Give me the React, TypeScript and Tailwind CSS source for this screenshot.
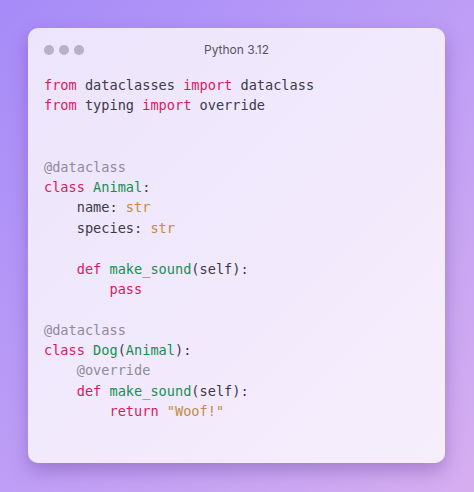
const kw = "text-[#d81b60]";
const fn = "text-[#16904f]";
const ty = "text-[#c28a45]";
const dec = "text-[#8e8b9a]";

type Tok = [string, string?];

const lines: Tok[][] = [
  [["from", kw], [" dataclasses "], ["import", kw], [" dataclass"]],
  [["from", kw], [" typing "], ["import", kw], [" override"]],
  [],
  [],
  [["@dataclass", dec]],
  [["class", kw], [" "], ["Animal", fn], [":"]],
  [["    name: "], ["str", ty]],
  [["    species: "], ["str", ty]],
  [],
  [["    "], ["def", kw], [" "], ["make_sound", fn], ["(self):"]],
  [["        "], ["pass", kw]],
  [],
  [["@dataclass", dec]],
  [["class", kw], [" "], ["Dog", fn], ["("], ["Animal", fn], ["):"]],
  [["    "], ["@override", dec]],
  [["    "], ["def", kw], [" "], ["make_sound", fn], ["(self):"]],
  [["        "], ["return", kw], [" "], ['"Woof!"', ty]],
];

export default function App() {
  return (
    <div className="w-[474px] h-[492px] bg-[linear-gradient(135deg,#a68bf8_0%,#bb9cf6_45%,#d6aef0_100%)] p-[28px] pr-[29px] pb-[29px]">
      <div className="h-full rounded-[10px] bg-[linear-gradient(135deg,#ece5fb_0%,#f1e9fc_50%,#f7eefc_100%)] shadow-[0_8px_18px_rgba(90,50,140,0.35)] px-[16px] pt-[43px] relative">
        <div className="absolute left-[16px] top-[16px] right-[16px] h-[12px] flex items-center">
          <div className="flex gap-[5px]">
            <span className="w-[10px] h-[10px] rounded-full bg-[#b5b1c6]" />
            <span className="w-[10px] h-[10px] rounded-full bg-[#b5b1c6]" />
            <span className="w-[10px] h-[10px] rounded-full bg-[#b5b1c6]" />
          </div>
        </div>
        <div className="absolute left-0 right-0 top-[15px] text-center text-[12px] leading-[14px] text-[#57545f] font-['Inter','Noto_Sans',sans-serif]">
          Python 3.12
        </div>
        <pre className="mt-[4px] font-['DejaVu_Sans_Mono','Liberation_Mono',monospace] text-[13.6px] leading-[20.4px] text-[#3b3a48]">
          {lines.map((l, i) => (
            <div key={i} className="h-[20.4px]">
              {l.map(([t, c], j) => (
                <span key={j} className={c}>
                  {t}
                </span>
              ))}
            </div>
          ))}
        </pre>
      </div>
    </div>
  );
}
